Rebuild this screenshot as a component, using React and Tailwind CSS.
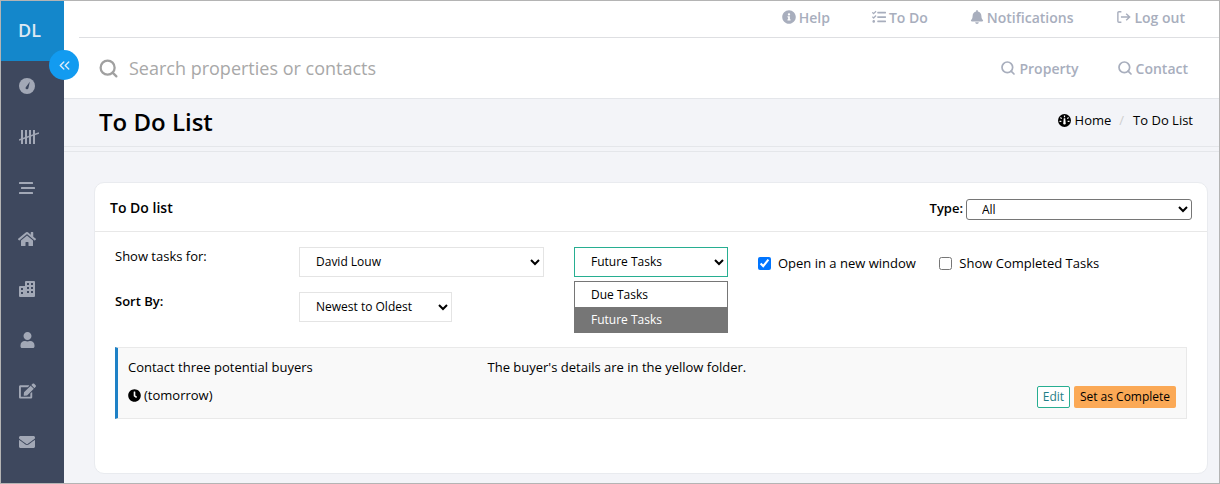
import { FaHome, FaUser, FaEdit, FaEnvelope, FaInfoCircle, FaTasks, FaBell, FaClock } from 'react-icons/fa'
import { Search, ChevronsLeft } from 'lucide-react'

const TallyIcon = ({ className }) => (
  <svg viewBox="0 0 20 14" className={className} fill="none" stroke="currentColor" strokeWidth="2">
    <path d="M3 0v14M7 0v14M11 0v14M15 0v14" />
    <path d="M0 10L20 3" strokeWidth="1.6" />
  </svg>
)

const GaugeIcon = ({ className }) => (
  <svg viewBox="0 0 16 16" className={className}>
    <circle cx="8" cy="8" r="8" fill="currentColor" />
    <path d="M6.6 9.4L10.8 3.8L9.4 10.2A1.4 1.4 0 0 1 6.6 9.4Z" fill="#3e485e" />
  </svg>
)

const BarsIcon = ({ className }) => (
  <svg viewBox="0 0 16 12" className={className} fill="currentColor">
    <rect x="0" y="0" width="14" height="2" rx="0.5" />
    <rect x="2" y="5" width="14" height="2" rx="0.5" />
    <rect x="0" y="10" width="14" height="2" rx="0.5" />
  </svg>
)

const BuildingsIcon = ({ className }) => (
  <svg viewBox="0 0 16 16" className={className}>
    <path d="M6 1a1 1 0 0 1 1-1h8a1 1 0 0 1 1 1v14a1 1 0 0 1-1 1H1a1 1 0 0 1-1-1V6a1 1 0 0 1 1-1h5Z" fill="currentColor" />
    <path d="M8 2h2v2H8zM12 2h2v2h-2zM8 6h2v2H8zM12 6h2v2h-2zM8 10h2v2H8zM12 10h2v2h-2zM2 7h2v2H2zM2 11h2v2H2z" fill="#3e485e" />
  </svg>
)

const LogoutIcon = ({ className }) => (
  <svg viewBox="0 0 16 14" className={className} fill="none" stroke="currentColor" strokeWidth="1.6">
    <path d="M5 1H2.2A1.2 1.2 0 0 0 1 2.2v9.6A1.2 1.2 0 0 0 2.2 13H5" />
    <path d="M4.5 7H14M10.5 3.2L14.5 7L10.5 10.8" />
  </svg>
)

const DashIcon = ({ className }) => (
  <svg viewBox="0 0 14 14" className={className}>
    <circle cx="7" cy="7" r="7" fill="currentColor" />
    <path d="M7 1.6v2M2.6 3.8l1.4 1.2M11.4 3.8L10 5M1.6 8h2M10.4 8h2" stroke="#fff" strokeWidth="1.3" />
    <path d="M6.2 4.6h1.6l.5 5.4a1.3 1.3 0 0 1-2.6 0Z" fill="#fff" />
  </svg>
)

const sideIcons = [
  { Icon: GaugeIcon, cls: 'w-4 h-4' },
  { Icon: TallyIcon, cls: 'w-5 h-[14px] ml-1' },
  { Icon: BarsIcon, cls: 'w-4 h-3' },
  { Icon: FaHome, cls: 'w-[18px] h-4' },
  { Icon: BuildingsIcon, cls: 'w-4 h-4' },
  { Icon: FaUser, cls: 'w-[15px] h-4' },
  { Icon: FaEdit, cls: 'w-[17px] h-4' },
  { Icon: FaEnvelope, cls: 'w-4 h-4' },
]

const topLinks = [
  { label: 'Help', Icon: FaInfoCircle, ml: '' },
  { label: 'To Do', Icon: FaTasks, ml: 'ml-[42px]' },
  { label: 'Notifications', Icon: FaBell, ml: 'ml-[42px]' },
  { label: 'Log out', Icon: LogoutIcon, ml: 'ml-[44px]' },
]

export default function App() {
  return (
    <div className="w-[1220px] h-[484px] overflow-hidden border border-[#b4b4b4] flex bg-[#f3f4f8] text-[13px] text-black font-['Open_Sans',sans-serif]">
      <aside className="w-[63px] shrink-0 bg-[#3e485e] text-[#a2a8b6]">
        <div className="h-[60px] bg-[#1487cb] text-[#dce9f3] flex items-center justify-center text-[18px] font-semibold pb-[2px] pr-[6px]">DL</div>
        <nav className="flex flex-col pt-[17px] gap-[34.86px]">
          {sideIcons.map(({ Icon, cls }, i) => (
            <div key={i} className="h-4 flex items-center justify-center pr-[11px]">
              <Icon className={cls} />
            </div>
          ))}
        </nav>
      </aside>

      <main className="flex-1 min-w-0 relative">
        <button className="absolute left-[-15px] top-[49px] w-[30px] h-[30px] rounded-full bg-[#129bf0] text-[#dcebf8] flex items-center justify-center">
          <ChevronsLeft className="w-[17px] h-[17px]" strokeWidth={2} />
        </button>

        <div className="bg-white h-[98px] border-b border-[#e4e6ea]">
          <div className="ml-[15px] h-[37px] border-b border-[#dedfe2] flex items-center justify-end pr-[34px] pb-[4px] text-[14px] font-semibold text-[#a8aebd]">
            {topLinks.map(({ label, Icon, ml }) => (
              <a key={label} className={`flex items-center gap-[3px] ${ml}`}>
                <Icon className="w-[14px] h-[14px]" />
                <span>{label}</span>
              </a>
            ))}
          </div>
          <div className="h-[60px] flex items-center pl-[34px] pr-[31px]">
            <Search className="w-[21px] h-[21px] text-[#a0a0a0]" strokeWidth={2.6} />
            <span className="ml-[10px] text-[18px] text-[#a8a8a8]">Search properties or contacts</span>
            <div className="ml-auto flex items-center text-[14px] font-semibold text-[#a8aebd]">
              <a className="flex items-center gap-[3px]"><Search className="w-[16px] h-[16px]" strokeWidth={2.6} />Property</a>
              <a className="flex items-center gap-[3px] ml-[38px]"><Search className="w-[16px] h-[16px]" strokeWidth={2.6} />Contact</a>
            </div>
          </div>
        </div>

        <div className="h-[48px] border-b border-[#e4e6ea] flex items-center pl-[35px] pr-[26px]">
          <h1 className="text-[24px] font-semibold leading-none pb-[2px]">To Do List</h1>
          <div className="ml-auto flex items-center pb-[4px]">
            <DashIcon className="w-[13px] h-[13px]" />
            <span className="ml-[4px]">Home</span>
            <span className="ml-[8px] mr-[9px] text-[#cfcfcf]">/</span>
            <span>To Do List</span>
          </div>
        </div>
        <div className="h-[5px] border-b border-[#e4e6ea]" />

        <section className="ml-[30px] mr-[11px] mt-[30px] h-[292px] bg-white border border-[#e9ebef] rounded-[10px]">
          <div className="h-[49px] border-b border-[#e8e8e8] flex items-center pl-[15px] pr-[15px]">
            <h2 className="text-[14px] font-semibold">To Do list</h2>
            <label className="ml-auto mt-[4px] flex items-center gap-[3px] font-semibold">
              Type:
              <select defaultValue="All" className="w-[226px] h-[21px] border border-[#767676] rounded-[3px] bg-white text-[12px] font-normal pl-[11px]">
                <option>All</option>
              </select>
            </label>
          </div>

          <div className="px-[20px] pt-[15px]">
            <div className="flex">
              <div className="w-[184px] flex flex-col">
                <span className="h-[30px]">Show tasks for:</span>
                <span className="mt-[15px] font-semibold">Sort By:</span>
              </div>
              <div className="flex flex-col gap-[15px]">
                <select defaultValue="David Louw" className="w-[245px] h-[30px] border border-[#e4e4e4] bg-white pl-[12px] pb-[2px] text-[12px]">
                  <option>David Louw</option>
                </select>
                <select defaultValue="Newest to Oldest" className="w-[153px] h-[30px] border border-[#e4e4e4] bg-white pl-[12px] pb-[2px] text-[12px]">
                  <option>Newest to Oldest</option>
                </select>
              </div>
              <div className="relative ml-[30px]">
                <select defaultValue="Future Tasks" className="w-[154px] h-[30px] border border-[#27ae91] bg-white pl-[12px] pb-[2px] text-[12px]">
                  <option>Due Tasks</option>
                  <option>Future Tasks</option>
                </select>
                <ul className="absolute left-0 top-[34px] w-[154px] border border-[#767676] bg-white text-[12px]">
                  <li className="h-[25px] pl-[16px] flex items-center">Due Tasks</li>
                  <li className="h-[25px] pl-[16px] flex items-center bg-[#767676] text-white">Future Tasks</li>
                </ul>
              </div>
              <label className="ml-[30px] h-[33px] flex items-center gap-[7px]">
                <input type="checkbox" defaultChecked className="w-[13px] h-[13px] accent-[#0075ff]" />
                Open in a new window
              </label>
              <label className="ml-[23px] h-[33px] flex items-center gap-[7px]">
                <input type="checkbox" className="w-[13px] h-[13px]" />
                <span className="ml-[0.5px]">Show Completed Tasks</span>
              </label>
            </div>

            <div className="mt-[25px] h-[72px] bg-[#f9f9f9] border border-[#e9e9e9] border-l-[3px] border-l-[#1e81c6] pl-[10px] pr-[10px] flex flex-col">
              <div className="flex pt-[10px]">
                <span className="w-[359.5px]">Contact three potential buyers</span>
                <span>The buyer's details are in the yellow folder.</span>
              </div>
              <div className="flex items-start mt-[8px]">
                <span className="flex items-center gap-[3px]"><FaClock className="w-[13px] h-[13px]" />(tomorrow)</span>
                <div className="ml-auto flex gap-[4px] text-[12px]">
                  <button className="h-[22px] w-[33px] border border-[#27ae91] rounded-[2px] bg-white text-[#1f7f86]">Edit</button>
                  <button className="h-[22px] w-[102px] bg-[#fba956] rounded-[2px]">Set as Complete</button>
                </div>
              </div>
            </div>
          </div>
        </section>
      </main>
    </div>
  )
}
